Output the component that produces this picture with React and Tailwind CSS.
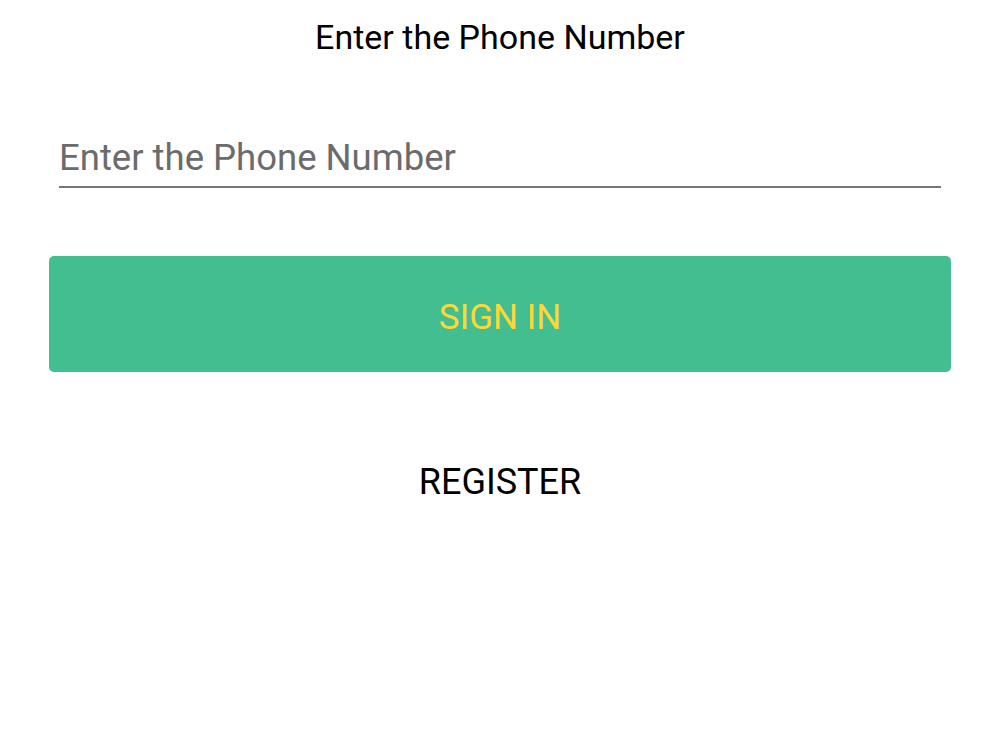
export default function App() {
  return (
    <div className="w-[1000px] h-[750px] bg-white font-['Roboto',sans-serif] flex flex-col items-center">
      {/* Title */}
      <h1 className="mt-[14px] h-[46px] leading-[46px] text-[34px] text-black">Enter the Phone Number</h1>

      {/* Phone input */}
      <div className="mt-[74px] w-[882px]">
        <input
          type="tel"
          placeholder="Enter the Phone Number"
          className="w-full h-[54px] pb-[4px] px-0 text-[36.5px] text-black placeholder:text-[#6b6b6b] bg-transparent outline-none border-b-2 border-[#757575]"
        />
      </div>

      {/* Sign in */}
      <button className="mt-[68px] w-[902px] h-[116px] pt-[8px] rounded-[5px] bg-[#43be91] text-[#fdd835] text-[35px] uppercase">
        Sign In
      </button>

      {/* Register */}
      <button className="mt-[83px] h-[48px] text-[36px] text-black uppercase">
        Register
      </button>
    </div>
  );
}
